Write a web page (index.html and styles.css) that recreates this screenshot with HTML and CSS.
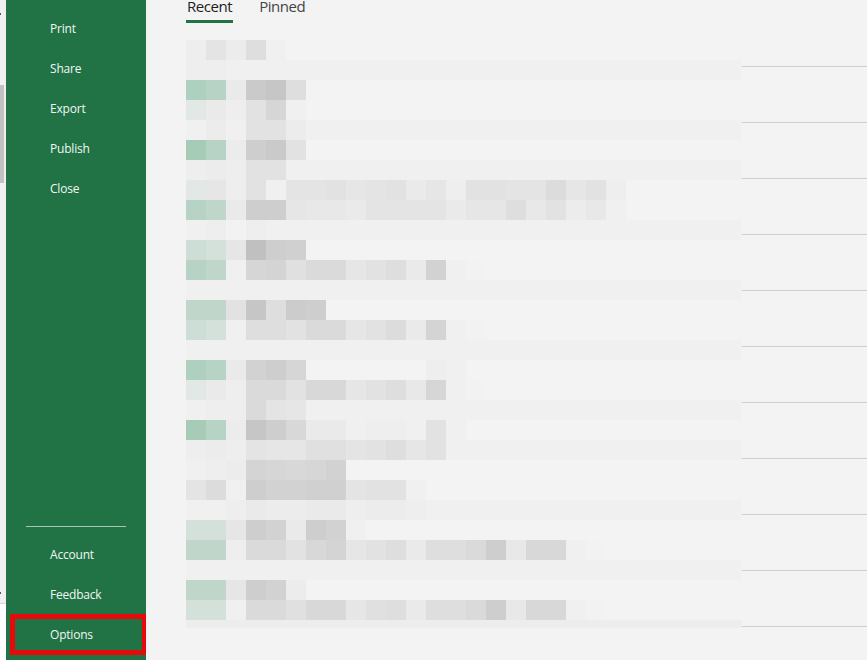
FILE: index.html
```html
<!DOCTYPE html>
<html lang="en">
<head>
<meta charset="utf-8">
<title>Excel backstage</title>
<link rel="stylesheet" href="styles.css">
</head>
<body>
<div class="strip">
  <div class="tick tick-top"></div>
  <div class="thumb"></div>
  <div class="tick tick-bottom"></div>
</div>
<nav class="side">
  <ul class="menu">
    <li class="item">Print</li>
    <li class="item">Share</li>
    <li class="item">Export</li>
    <li class="item">Publish</li>
    <li class="item">Close</li>
  </ul>
  <ul class="menu menu-bottom">
    <li class="sep"></li>
    <li class="item">Account</li>
    <li class="item">Feedback</li>
    <li class="item options">Options</li>
  </ul>
</nav>
<main class="main">
  <div class="tabs">
    <span class="tab active">Recent</span>
    <span class="tab">Pinned</span>
  </div>
  <div class="content">
    <div class="mosaic">
      <div class="row"><i class="ee"></i><i class="e4"></i><i class="ec"></i><i class="de"></i><i class="f0"></i></div>
      <div class="row band"><i class="ee"></i><i class="ee"></i></div>
      <div class="row"><i class="ga"></i><i class="gb"></i><i class="ea"></i><i class="ca"></i><i class="c6"></i><i class="de"></i></div>
      <div class="row"><i class="gf"></i><i class="ea"></i><i class="ee"></i><i class="e2"></i><i class="d6"></i><i class="f0"></i></div>
      <div class="row band"><i class="f0"></i><i class="ec"></i><i class="f0"></i><i class="e2"></i><i class="e2"></i><i class="ec"></i></div>
      <div class="row"><i class="gs"></i><i class="gb"></i><i class="ec"></i><i class="ce"></i><i class="ca"></i><i class="e2"></i></div>
      <div class="row band"><i class="ee"></i><i class="ec"></i><i class="ee"></i><i class="e2"></i><i class="e2"></i></div>
      <div class="row"><i class="gf"></i><i class="e6"></i><i class="ee"></i><i class="e2"></i><i class="f0"></i><i class="e4"></i><i class="e4"></i><i class="e2"></i><i class="e6"></i><i class="e4"></i><i class="e2"></i><i class="ea"></i><i class="e6"></i><i class="ee"></i><i class="e2"></i><i class="e2"></i><i class="e4"></i><i class="e4"></i><i class="dc"></i><i class="e6"></i><i class="e2"></i><i class="ee"></i></div>
      <div class="row"><i class="gb"></i><i class="gc"></i><i class="ea"></i><i class="ce"></i><i class="ce"></i><i class="e6"></i><i class="e8"></i><i class="e8"></i><i class="ea"></i><i class="e4"></i><i class="e4"></i><i class="e4"></i><i class="e4"></i><i class="ea"></i><i class="e6"></i><i class="e6"></i><i class="de"></i><i class="e8"></i><i class="e2"></i><i class="ec"></i><i class="e8"></i><i class="f0"></i></div>
      <div class="row band"><i class="f0"></i><i class="ee"></i><i class="f2"></i><i class="ee"></i></div>
      <div class="row"><i class="gd"></i><i class="ge"></i><i class="e6"></i><i class="c0"></i><i class="ce"></i><i class="d0"></i></div>
      <div class="row"><i class="gb"></i><i class="gc"></i><i class="f0"></i><i class="d6"></i><i class="d4"></i><i class="e0"></i><i class="da"></i><i class="da"></i><i class="e6"></i><i class="e2"></i><i class="de"></i><i class="ea"></i><i class="d2"></i><i class="f0"></i><i class="f2"></i></div>
      <div class="row band"></div>
      <div class="row"><i class="gc"></i><i class="gc"></i><i class="e2"></i><i class="c6"></i><i class="de"></i><i class="cc"></i><i class="ce"></i></div>
      <div class="row"><i class="gd"></i><i class="ge"></i><i class="f0"></i><i class="de"></i><i class="de"></i><i class="e2"></i><i class="da"></i><i class="da"></i><i class="e6"></i><i class="e2"></i><i class="dc"></i><i class="ea"></i><i class="d4"></i><i class="f0"></i><i class="f2"></i></div>
      <div class="row band"></div>
      <div class="row"><i class="ga"></i><i class="gb"></i><i class="ea"></i><i class="d2"></i><i class="ce"></i><i class="d6"></i><i></i><i></i><i></i><i></i><i></i><i></i><i class="ee"></i><i class="f0"></i></div>
      <div class="row"><i class="gf"></i><i class="ea"></i><i class="ee"></i><i class="da"></i><i class="da"></i><i class="e2"></i><i class="d8"></i><i class="d8"></i><i class="e6"></i><i class="e2"></i><i class="de"></i><i class="e8"></i><i class="d6"></i><i class="f0"></i><i class="f2"></i></div>
      <div class="row band"><i class="f0"></i><i class="ee"></i><i class="ee"></i><i class="da"></i><i class="e4"></i><i class="e6"></i></div>
      <div class="row"><i class="gs"></i><i class="gb"></i><i class="ec"></i><i class="c6"></i><i class="ce"></i><i class="d8"></i><i class="ea"></i><i class="ea"></i><i class="f0"></i><i class="ee"></i><i class="ee"></i><i class="f0"></i><i class="e2"></i><i class="f0"></i></div>
      <div class="row band"><i class="ee"></i><i class="ec"></i><i class="ee"></i><i class="e4"></i><i class="e6"></i><i class="e6"></i><i class="e0"></i><i class="e0"></i><i class="e4"></i><i class="e2"></i><i class="de"></i><i class="e6"></i><i class="e2"></i></div>
      <div class="row"><i class="f0"></i><i class="ee"></i><i class="ec"></i><i class="d4"></i><i class="d6"></i><i class="d8"></i><i class="d6"></i><i class="d2"></i></div>
      <div class="row"><i class="e4"></i><i class="dc"></i><i class="f0"></i><i class="ce"></i><i class="d2"></i><i class="d2"></i><i class="d0"></i><i class="d0"></i><i class="e4"></i><i class="e2"></i><i class="e2"></i><i class="f0"></i></div>
      <div class="row band"><i class="f0"></i><i class="f0"></i><i class="ee"></i><i class="ea"></i><i class="ec"></i><i class="ec"></i><i class="ea"></i><i class="ea"></i><i class="ee"></i><i class="ec"></i><i class="ec"></i><i class="ee"></i></div>
      <div class="row"><i class="ge"></i><i class="ge"></i><i class="e6"></i><i class="ce"></i><i class="d2"></i><i class="ea"></i><i class="ce"></i><i class="d2"></i><i class="f0"></i></div>
      <div class="row"><i class="gc"></i><i class="gc"></i><i class="ee"></i><i class="da"></i><i class="da"></i><i class="e2"></i><i class="d8"></i><i class="d4"></i><i class="e6"></i><i class="e2"></i><i class="de"></i><i class="ea"></i><i class="de"></i><i class="de"></i><i class="da"></i><i class="ce"></i><i class="e8"></i><i class="d8"></i><i class="d8"></i><i class="f0"></i><i class="f2"></i></div>
      <div class="row band"></div>
      <div class="row"><i class="gc"></i><i class="gc"></i><i class="e6"></i><i class="ce"></i><i class="d2"></i><i class="ec"></i></div>
      <div class="row"><i class="ge"></i><i class="ge"></i><i class="f0"></i><i class="da"></i><i class="da"></i><i class="e0"></i><i class="d8"></i><i class="d8"></i><i class="e6"></i><i class="e0"></i><i class="de"></i><i class="ea"></i><i class="de"></i><i class="de"></i><i class="da"></i><i class="ce"></i><i class="e8"></i><i class="d8"></i><i class="d8"></i><i class="f0"></i><i class="f2"></i></div>
      <div class="row band last"></div>
    </div>
    <div class="rail">
      <div class="rule"></div><div class="rule"></div><div class="rule"></div><div class="rule"></div>
      <div class="rule"></div><div class="rule"></div><div class="rule"></div><div class="rule"></div>
      <div class="rule"></div><div class="rule"></div><div class="rule"></div>
    </div>
  </div>
</main>
</body>
</html>
```

FILE: styles.css
```css
* { box-sizing: border-box; }
html, body { margin: 0; padding: 0; height: 660px; overflow: hidden; }
body { display: flex; background: #fff; font-family: "Open Sans", "Noto Sans", sans-serif; }

.strip { width: 6px; height: 604px; flex: none; display: flex; flex-direction: column; align-items: flex-start; padding-top: 3px; background: #f0f0f2; border-bottom: 1px solid #d8d8d8; }
.tick { width: 1px; height: 2px; background: #555; }
.tick-top { margin-top: 10px; }
.thumb { width: 4px; height: 98px; margin-top: 70px; background: #c2c2c2; }
.tick-bottom { margin-top: 409px; }

.side { width: 140px; flex: none; height: 660px; display: flex; flex-direction: column; justify-content: space-between; padding: 9px 0 5px; background: #217346; color: #f2f7f4; }
.menu { list-style: none; margin: 0; padding: 0; }
.item { height: 40px; padding-left: 44px; font-size: 12px; letter-spacing: -0.2px; line-height: 40px; }
.sep { height: 1px; margin: 0 20px 8px; background: #a3c7b5; }
.options { height: 41px; margin-top: -1px; margin-left: 4px; padding-left: 35px; line-height: 31px; border: 5px solid #e60a0a; border-right-width: 4px; }

.main { flex: 1; min-width: 0; height: 660px; padding-left: 40px; background: #f3f3f3; }
.tabs { display: flex; gap: 25px; height: 23px; color: #444; }
.tab { height: 23px; font-size: 15px; letter-spacing: -0.45px; line-height: 12px; padding: 0 1px; }
.active { color: #222; border-bottom: 3px solid #217346; }

.content { display: flex; margin-top: 17px; }
.mosaic { width: 556px; flex: none; }
.row { display: flex; height: 20px; }
.band { background: #f0f0f0; }
.last { height: 8px; background: #ededed; }
.row i { display: block; width: 20px; flex: none; }

.rail { flex: 1; display: flex; flex-direction: column; gap: 55px; padding-top: 26px; }
.rule { height: 1px; background: #cfcfcf; }

.c0 { background: #c0c0c0; } .c6 { background: #c6c6c6; } .ca { background: #cacaca; }
.cc { background: #cccccc; } .ce { background: #cecece; } .d0 { background: #d0d0d0; }
.d2 { background: #d2d2d2; } .d4 { background: #d4d4d4; } .d6 { background: #d6d6d6; }
.d8 { background: #d8d8d8; } .da { background: #dadada; } .dc { background: #dcdcdc; }
.de { background: #dedede; } .e0 { background: #e0e0e0; } .e2 { background: #e2e2e2; }
.e4 { background: #e4e4e4; } .e6 { background: #e6e6e6; } .e8 { background: #e8e8e8; }
.ea { background: #eaeaea; } .ec { background: #ececec; } .ee { background: #eeeeee; }
.f0 { background: #f0f0f0; } .f2 { background: #f2f2f2; }
.gs { background: #a6ccb8; } .ga { background: #aed0bf; } .gb { background: #b6d3c5; }
.gc { background: #c0d6cb; } .gd { background: #ccded5; } .ge { background: #d4e0da; }
.gf { background: #e2e8e6; }
```
